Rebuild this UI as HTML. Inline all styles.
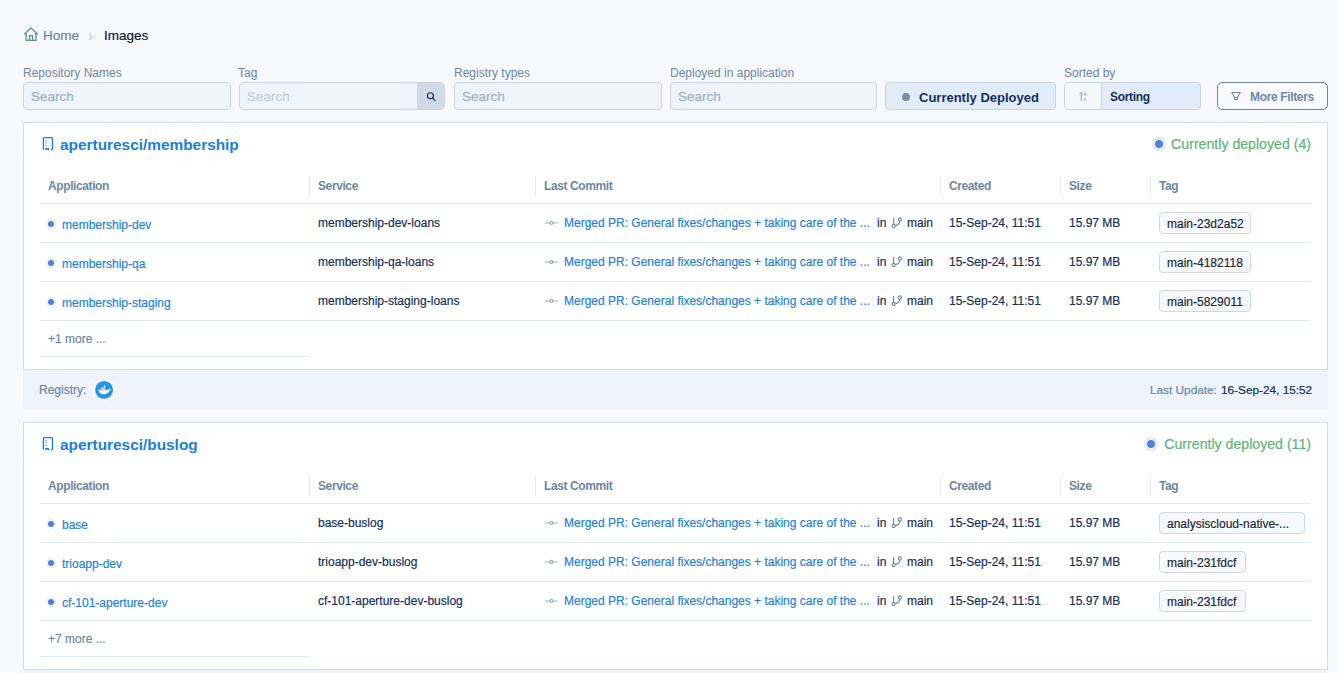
<!DOCTYPE html><html><head><meta charset="utf-8"><style>
*{box-sizing:border-box;margin:0;padding:0}
html,body{width:1339px;height:673px;overflow:hidden;background:#f7f9fd;font-family:"Liberation Sans", sans-serif;}
.a{position:absolute;white-space:nowrap}
.rg{-webkit-text-stroke:0.2px}
.lbl{font-size:12px;color:#6e86a1;line-height:14px}
.inp{position:absolute;top:82px;height:28px;background:#eff4fb;border:1px solid #cbd6e5;border-radius:4px}
.ph{position:absolute;left:7px;top:6px;font-size:13.5px;line-height:16px;color:#9fb0c5}
.card{position:absolute;left:23px;width:1305px;height:248px;background:#fff;border:1px solid #d3dcea}
.ttl{font-size:15.4px;font-weight:bold;color:#1a7fd9;line-height:18px}
.dep{font-size:14.15px;color:#5db677;line-height:16px}
.th{font-size:12px;font-weight:bold;color:#6f86a1;letter-spacing:-0.4px;line-height:14px}
.sep{position:absolute;width:1px;height:20px;background:#e9ecf0}
.hl{position:absolute;height:1px;background:#e2eaf4}
.td{font-size:12px;color:#17315a;line-height:14px}
.lnk{font-size:12px;color:#1f83d9;line-height:14px}
.tag{position:absolute;height:22px;border:1px solid #cdd7e6;background:#f7f9fc;border-radius:4px;font-size:12px;color:#1d2b3d;line-height:20px;padding-left:7px;padding-top:1px}
.more{font-size:12px;color:#6e86a1;line-height:14px}
.reg{position:absolute;left:23px;width:1305px;height:40px;background:#eff4fc}
</style></head><body>
<svg class="a" style="left:23px;top:26px" width="16" height="16" viewBox="0 0 16 16">
<path d="M1.2 8.5 L8 1.8 L14.8 8.5" fill="none" stroke="#6d84a0" stroke-width="1.3" stroke-linejoin="miter"/>
<path d="M3.1 7 V14.3 H12.9 V7" fill="none" stroke="#6d84a0" stroke-width="1.3"/>
<path d="M6.5 14.3 V9.6 H9.5 V14.3" fill="none" stroke="#6d84a0" stroke-width="1.3"/>
</svg>
<div class="a rg" style="left:43px;top:28px;font-size:13.5px;line-height:16px;color:#6b84a0">Home</div>
<svg class="a" style="left:88px;top:33px" width="6" height="8" viewBox="0 0 6 8"><path d="M1.3 1 L4.3 4 L1.3 7" fill="none" stroke="#a2b2c5" stroke-width="1"/></svg>
<div class="a rg" style="left:104px;top:28px;font-size:13.5px;line-height:16px;color:#0f1e33">Images</div>
<div class="a lbl" style="left:23px;top:66px">Repository Names</div>
<div class="a lbl" style="left:238px;top:66px">Tag</div>
<div class="a lbl" style="left:454px;top:66px">Registry types</div>
<div class="a lbl" style="left:670px;top:66px">Deployed in application</div>
<div class="a lbl" style="left:1064px;top:66px">Sorted by</div>
<div class="inp" style="left:23px;width:208px"><span class="ph rg" style="color:#9cafc6">Search</span></div>
<div class="inp" style="left:239px;width:206px;overflow:hidden"><span class="ph rg" style="color:#c3cedc">Search</span><div style="position:absolute;right:-1px;top:-1px;width:28px;height:28px;background:#d0dae8;border-radius:0 4px 4px 0"></div><svg style="position:absolute;left:185px;top:8px" width="12" height="12" viewBox="0 0 12 12"><circle cx="5.4" cy="4.7" r="3" fill="none" stroke="#1c2b40" stroke-width="1.15"/><path d="M7.5 6.9 L10.2 9.8" stroke="#1c2b40" stroke-width="1.2"/></svg></div>
<div class="inp" style="left:454px;width:208px"><span class="ph rg">Search</span></div>
<div class="inp" style="left:670px;width:207px"><span class="ph rg">Search</span></div>
<div class="inp" style="left:885px;width:171px;background:#e2ecf8;border-color:#c8d5e6"><div style="position:absolute;left:16px;top:10px;width:8px;height:8px;border-radius:50%;background:#7a8fa7"></div><span style="position:absolute;left:33px;top:7px;font-size:13px;font-weight:bold;color:#12305a;line-height:16px">Currently Deployed</span></div>
<div class="inp" style="left:1064px;width:137px;background:#e2ecf8;border-color:#c8d5e6;overflow:hidden"><div style="position:absolute;left:0;top:0;width:37px;height:26px;background:#f4f7fc;border-right:1px solid #c8d5e6"></div><svg style="position:absolute;left:11px;top:7px" width="14" height="14" viewBox="0 0 14 14"><path d="M5.3 11 V2.6 M3.5 4.4 L5.3 2.4 L7.1 4.4" fill="none" stroke="#93a2b6" stroke-width="1"/><text x="7.6" y="5.9" font-size="4.8" fill="#a3b2c4" font-family="Liberation Sans" font-weight="bold">A</text><text x="7.8" y="11" font-size="4.8" fill="#a3b2c4" font-family="Liberation Sans" font-weight="bold">z</text></svg><span style="position:absolute;left:45px;top:7px;font-size:12px;font-weight:bold;letter-spacing:-0.3px;color:#12305a;line-height:14px">Sorting</span></div>
<div class="inp" style="left:1217px;width:111px;background:#f8fafd;border-color:#6e86a2;border-radius:5px"><svg style="position:absolute;left:13px;top:8px" width="11" height="10" viewBox="0 0 11 10"><path d="M0.4 1.5 H9.8 M0.9 1.5 L3.6 6.3 M9.3 1.5 L6.6 6.3" fill="none" stroke="#6e86a2" stroke-width="1"/><rect x="3.6" y="6.3" width="3" height="2.3" fill="none" stroke="#6e86a2" stroke-width="1"/></svg><span style="position:absolute;left:32px;top:6px;font-size:12px;font-weight:bold;letter-spacing:-0.35px;color:#7088a3;line-height:16px">More Filters</span></div>
<div class="card" style="top:122px"></div>
<svg class="a" style="left:41px;top:136px" width="14" height="15" viewBox="0 0 14 15">
<path d="M2.4 13.7 V2.6 Q2.4 1.6 3.4 1.6 H10.5 Q11.5 1.6 11.5 2.6 V12.7 Q11.5 13.7 10.5 13.7 H9.8" fill="none" stroke="#1a7fd9" stroke-width="1.35"/>
<path d="M4.4 4.3 H5.7 M4.4 6.8 H5.7 M4.4 9.4 H5.7" stroke="#1a7fd9" stroke-width="1" opacity="0.85"/>
<path d="M4.3 12 H8 V14.6 L6.15 13.5 L4.3 14.6 Z" fill="#1a7fd9"/>
</svg>
<div class="a ttl" style="left:60px;top:136px">aperturesci/membership</div>
<div class="a dep rg" style="right:28px;top:136px">Currently deployed (4)</div>
<div class="a" style="left:1152px;top:137px;width:14px;height:14px;border-radius:50%;border:2px solid #dfe7f9;background:#fff"></div>
<div class="a" style="left:1155px;top:140px;width:8px;height:8px;border-radius:50%;background:#4f80df"></div>
<div class="a th" style="left:48px;top:179px">Application</div>
<div class="a th" style="left:318px;top:179px">Service</div>
<div class="a th" style="left:544px;top:179px">Last Commit</div>
<div class="a th" style="left:949px;top:179px">Created</div>
<div class="a th" style="left:1069px;top:179px">Size</div>
<div class="a th" style="left:1159px;top:179px">Tag</div>
<div class="sep" style="left:309px;top:176px"></div>
<div class="sep" style="left:535px;top:176px"></div>
<div class="sep" style="left:940px;top:176px"></div>
<div class="sep" style="left:1060px;top:176px"></div>
<div class="sep" style="left:1150px;top:176px"></div>
<div class="hl" style="left:40px;width:1271px;top:203px"></div>
<div class="a" style="left:46px;top:219px;width:10px;height:10px;border-radius:50%;border:1px solid #dfe7f9;background:#fff"></div>
<div class="a" style="left:48px;top:221px;width:6px;height:6px;border-radius:50%;background:#4f80df"></div>
<div class="a lnk rg" style="left:62px;top:218px">membership-dev</div>
<div class="a td rg" style="left:318px;top:216px">membership-dev-loans</div>
<svg class="a" style="left:544px;top:219px" width="16" height="8" viewBox="0 0 16 8"><path d="M1 4 H5.8 M9.2 4 H14" stroke="#bfcbd8" stroke-width="1.3"/><circle cx="7.5" cy="3.9" r="1.55" fill="none" stroke="#7088a3" stroke-width="0.95"/></svg>
<div class="a lnk rg" style="left:564px;top:216px">Merged PR: General fixes/changes + taking care of the ...</div>
<div class="a td rg" style="left:877px;top:216px">in</div>
<svg class="a" style="left:889px;top:217px" width="14" height="13" viewBox="0 0 14 13"><path d="M4.6 1 V7.3" stroke="#6f86a1" stroke-width="1.1"/><circle cx="4.6" cy="9" r="1.6" fill="none" stroke="#6f86a1" stroke-width="1.1"/><circle cx="10.8" cy="2.5" r="1.6" fill="none" stroke="#6f86a1" stroke-width="1.1"/><path d="M10.8 4.1 C10.8 6.8 8.6 8.2 6.2 8.9" fill="none" stroke="#6f86a1" stroke-width="1.1"/></svg>
<div class="a td rg" style="left:907px;top:216px">main</div>
<div class="a td rg" style="left:949px;top:216px">15-Sep-24, 11:51</div>
<div class="a td rg" style="left:1069px;top:216px">15.97 MB</div>
<div class="tag rg" style="left:1159px;top:212px;width:92px">main-23d2a52</div>
<div class="hl" style="left:40px;width:1271px;top:242px"></div>
<div class="a" style="left:46px;top:258px;width:10px;height:10px;border-radius:50%;border:1px solid #dfe7f9;background:#fff"></div>
<div class="a" style="left:48px;top:260px;width:6px;height:6px;border-radius:50%;background:#4f80df"></div>
<div class="a lnk rg" style="left:62px;top:257px">membership-qa</div>
<div class="a td rg" style="left:318px;top:255px">membership-qa-loans</div>
<svg class="a" style="left:544px;top:258px" width="16" height="8" viewBox="0 0 16 8"><path d="M1 4 H5.8 M9.2 4 H14" stroke="#bfcbd8" stroke-width="1.3"/><circle cx="7.5" cy="3.9" r="1.55" fill="none" stroke="#7088a3" stroke-width="0.95"/></svg>
<div class="a lnk rg" style="left:564px;top:255px">Merged PR: General fixes/changes + taking care of the ...</div>
<div class="a td rg" style="left:877px;top:255px">in</div>
<svg class="a" style="left:889px;top:256px" width="14" height="13" viewBox="0 0 14 13"><path d="M4.6 1 V7.3" stroke="#6f86a1" stroke-width="1.1"/><circle cx="4.6" cy="9" r="1.6" fill="none" stroke="#6f86a1" stroke-width="1.1"/><circle cx="10.8" cy="2.5" r="1.6" fill="none" stroke="#6f86a1" stroke-width="1.1"/><path d="M10.8 4.1 C10.8 6.8 8.6 8.2 6.2 8.9" fill="none" stroke="#6f86a1" stroke-width="1.1"/></svg>
<div class="a td rg" style="left:907px;top:255px">main</div>
<div class="a td rg" style="left:949px;top:255px">15-Sep-24, 11:51</div>
<div class="a td rg" style="left:1069px;top:255px">15.97 MB</div>
<div class="tag rg" style="left:1159px;top:251px;width:92px">main-4182118</div>
<div class="hl" style="left:40px;width:1271px;top:281px"></div>
<div class="a" style="left:46px;top:297px;width:10px;height:10px;border-radius:50%;border:1px solid #dfe7f9;background:#fff"></div>
<div class="a" style="left:48px;top:299px;width:6px;height:6px;border-radius:50%;background:#4f80df"></div>
<div class="a lnk rg" style="left:62px;top:296px">membership-staging</div>
<div class="a td rg" style="left:318px;top:294px">membership-staging-loans</div>
<svg class="a" style="left:544px;top:297px" width="16" height="8" viewBox="0 0 16 8"><path d="M1 4 H5.8 M9.2 4 H14" stroke="#bfcbd8" stroke-width="1.3"/><circle cx="7.5" cy="3.9" r="1.55" fill="none" stroke="#7088a3" stroke-width="0.95"/></svg>
<div class="a lnk rg" style="left:564px;top:294px">Merged PR: General fixes/changes + taking care of the ...</div>
<div class="a td rg" style="left:877px;top:294px">in</div>
<svg class="a" style="left:889px;top:295px" width="14" height="13" viewBox="0 0 14 13"><path d="M4.6 1 V7.3" stroke="#6f86a1" stroke-width="1.1"/><circle cx="4.6" cy="9" r="1.6" fill="none" stroke="#6f86a1" stroke-width="1.1"/><circle cx="10.8" cy="2.5" r="1.6" fill="none" stroke="#6f86a1" stroke-width="1.1"/><path d="M10.8 4.1 C10.8 6.8 8.6 8.2 6.2 8.9" fill="none" stroke="#6f86a1" stroke-width="1.1"/></svg>
<div class="a td rg" style="left:907px;top:294px">main</div>
<div class="a td rg" style="left:949px;top:294px">15-Sep-24, 11:51</div>
<div class="a td rg" style="left:1069px;top:294px">15.97 MB</div>
<div class="tag rg" style="left:1159px;top:290px;width:92px">main-5829011</div>
<div class="hl" style="left:40px;width:1271px;top:320px"></div>
<div class="a more rg" style="left:48px;top:332px">+1 more ...</div>
<div class="hl" style="left:40px;width:270px;top:356px"></div>
<div class="reg" style="top:370px"></div>
<div class="a more rg" style="left:39px;top:383px">Registry:</div>
<svg class="a" style="left:93px;top:379px" width="22" height="22" viewBox="0 0 22 22">
<circle cx="11.1" cy="10.9" r="11" fill="none" stroke="#ffffff" stroke-width="1.2" opacity="0.9"/>
<circle cx="11.1" cy="10.9" r="8.9" fill="#2496ed"/>
<path d="M5.3 10.7 L15.9 10.7 C16.2 10 16.4 9.3 16.3 9 C16.9 9.4 17.1 9.9 17.1 10.4 C17.5 10.2 17.9 10.2 18.2 10.4 C17.8 11 17.2 11.4 16.6 11.5 C15.5 14 13.4 15.2 11 15.2 C7.8 15.2 5.8 13.4 5.3 10.7 Z" fill="#fff"/>
<path d="M8 8.5 h1.6 v2.1 h-1.6z M9.8 8.5 h1.5 v2.1 h-1.5z" fill="#cfe6fb"/>
<path d="M11.1 6.1 h1 v4.5 h-1z" fill="#eef7fe"/>
</svg>
<div class="a rg" style="left:1150px;top:383px;font-size:11.8px;line-height:14px;color:#6e86a1">Last Update:</div>
<div class="a rg" style="left:1221px;top:383px;font-size:11.8px;line-height:14px;color:#14305a">16-Sep-24, 15:52</div>
<div class="card" style="top:422px"></div>
<svg class="a" style="left:41px;top:436px" width="14" height="15" viewBox="0 0 14 15">
<path d="M2.4 13.7 V2.6 Q2.4 1.6 3.4 1.6 H10.5 Q11.5 1.6 11.5 2.6 V12.7 Q11.5 13.7 10.5 13.7 H9.8" fill="none" stroke="#1a7fd9" stroke-width="1.35"/>
<path d="M4.4 4.3 H5.7 M4.4 6.8 H5.7 M4.4 9.4 H5.7" stroke="#1a7fd9" stroke-width="1" opacity="0.85"/>
<path d="M4.3 12 H8 V14.6 L6.15 13.5 L4.3 14.6 Z" fill="#1a7fd9"/>
</svg>
<div class="a ttl" style="left:60px;top:436px">aperturesci/buslog</div>
<div class="a dep rg" style="right:28px;top:436px">Currently deployed (11)</div>
<div class="a" style="left:1144px;top:437px;width:14px;height:14px;border-radius:50%;border:2px solid #dfe7f9;background:#fff"></div>
<div class="a" style="left:1147px;top:440px;width:8px;height:8px;border-radius:50%;background:#4f80df"></div>
<div class="a th" style="left:48px;top:479px">Application</div>
<div class="a th" style="left:318px;top:479px">Service</div>
<div class="a th" style="left:544px;top:479px">Last Commit</div>
<div class="a th" style="left:949px;top:479px">Created</div>
<div class="a th" style="left:1069px;top:479px">Size</div>
<div class="a th" style="left:1159px;top:479px">Tag</div>
<div class="sep" style="left:309px;top:476px"></div>
<div class="sep" style="left:535px;top:476px"></div>
<div class="sep" style="left:940px;top:476px"></div>
<div class="sep" style="left:1060px;top:476px"></div>
<div class="sep" style="left:1150px;top:476px"></div>
<div class="hl" style="left:40px;width:1271px;top:503px"></div>
<div class="a" style="left:46px;top:519px;width:10px;height:10px;border-radius:50%;border:1px solid #dfe7f9;background:#fff"></div>
<div class="a" style="left:48px;top:521px;width:6px;height:6px;border-radius:50%;background:#4f80df"></div>
<div class="a lnk rg" style="left:62px;top:518px">base</div>
<div class="a td rg" style="left:318px;top:516px">base-buslog</div>
<svg class="a" style="left:544px;top:519px" width="16" height="8" viewBox="0 0 16 8"><path d="M1 4 H5.8 M9.2 4 H14" stroke="#bfcbd8" stroke-width="1.3"/><circle cx="7.5" cy="3.9" r="1.55" fill="none" stroke="#7088a3" stroke-width="0.95"/></svg>
<div class="a lnk rg" style="left:564px;top:516px">Merged PR: General fixes/changes + taking care of the ...</div>
<div class="a td rg" style="left:877px;top:516px">in</div>
<svg class="a" style="left:889px;top:517px" width="14" height="13" viewBox="0 0 14 13"><path d="M4.6 1 V7.3" stroke="#6f86a1" stroke-width="1.1"/><circle cx="4.6" cy="9" r="1.6" fill="none" stroke="#6f86a1" stroke-width="1.1"/><circle cx="10.8" cy="2.5" r="1.6" fill="none" stroke="#6f86a1" stroke-width="1.1"/><path d="M10.8 4.1 C10.8 6.8 8.6 8.2 6.2 8.9" fill="none" stroke="#6f86a1" stroke-width="1.1"/></svg>
<div class="a td rg" style="left:907px;top:516px">main</div>
<div class="a td rg" style="left:949px;top:516px">15-Sep-24, 11:51</div>
<div class="a td rg" style="left:1069px;top:516px">15.97 MB</div>
<div class="tag rg" style="left:1159px;top:512px;width:146px">analysiscloud-native-...</div>
<div class="hl" style="left:40px;width:1271px;top:542px"></div>
<div class="a" style="left:46px;top:558px;width:10px;height:10px;border-radius:50%;border:1px solid #dfe7f9;background:#fff"></div>
<div class="a" style="left:48px;top:560px;width:6px;height:6px;border-radius:50%;background:#4f80df"></div>
<div class="a lnk rg" style="left:62px;top:557px">trioapp-dev</div>
<div class="a td rg" style="left:318px;top:555px">trioapp-dev-buslog</div>
<svg class="a" style="left:544px;top:558px" width="16" height="8" viewBox="0 0 16 8"><path d="M1 4 H5.8 M9.2 4 H14" stroke="#bfcbd8" stroke-width="1.3"/><circle cx="7.5" cy="3.9" r="1.55" fill="none" stroke="#7088a3" stroke-width="0.95"/></svg>
<div class="a lnk rg" style="left:564px;top:555px">Merged PR: General fixes/changes + taking care of the ...</div>
<div class="a td rg" style="left:877px;top:555px">in</div>
<svg class="a" style="left:889px;top:556px" width="14" height="13" viewBox="0 0 14 13"><path d="M4.6 1 V7.3" stroke="#6f86a1" stroke-width="1.1"/><circle cx="4.6" cy="9" r="1.6" fill="none" stroke="#6f86a1" stroke-width="1.1"/><circle cx="10.8" cy="2.5" r="1.6" fill="none" stroke="#6f86a1" stroke-width="1.1"/><path d="M10.8 4.1 C10.8 6.8 8.6 8.2 6.2 8.9" fill="none" stroke="#6f86a1" stroke-width="1.1"/></svg>
<div class="a td rg" style="left:907px;top:555px">main</div>
<div class="a td rg" style="left:949px;top:555px">15-Sep-24, 11:51</div>
<div class="a td rg" style="left:1069px;top:555px">15.97 MB</div>
<div class="tag rg" style="left:1159px;top:551px;width:87px">main-231fdcf</div>
<div class="hl" style="left:40px;width:1271px;top:581px"></div>
<div class="a" style="left:46px;top:597px;width:10px;height:10px;border-radius:50%;border:1px solid #dfe7f9;background:#fff"></div>
<div class="a" style="left:48px;top:599px;width:6px;height:6px;border-radius:50%;background:#4f80df"></div>
<div class="a lnk rg" style="left:62px;top:596px">cf-101-aperture-dev</div>
<div class="a td rg" style="left:318px;top:594px">cf-101-aperture-dev-buslog</div>
<svg class="a" style="left:544px;top:597px" width="16" height="8" viewBox="0 0 16 8"><path d="M1 4 H5.8 M9.2 4 H14" stroke="#bfcbd8" stroke-width="1.3"/><circle cx="7.5" cy="3.9" r="1.55" fill="none" stroke="#7088a3" stroke-width="0.95"/></svg>
<div class="a lnk rg" style="left:564px;top:594px">Merged PR: General fixes/changes + taking care of the ...</div>
<div class="a td rg" style="left:877px;top:594px">in</div>
<svg class="a" style="left:889px;top:595px" width="14" height="13" viewBox="0 0 14 13"><path d="M4.6 1 V7.3" stroke="#6f86a1" stroke-width="1.1"/><circle cx="4.6" cy="9" r="1.6" fill="none" stroke="#6f86a1" stroke-width="1.1"/><circle cx="10.8" cy="2.5" r="1.6" fill="none" stroke="#6f86a1" stroke-width="1.1"/><path d="M10.8 4.1 C10.8 6.8 8.6 8.2 6.2 8.9" fill="none" stroke="#6f86a1" stroke-width="1.1"/></svg>
<div class="a td rg" style="left:907px;top:594px">main</div>
<div class="a td rg" style="left:949px;top:594px">15-Sep-24, 11:51</div>
<div class="a td rg" style="left:1069px;top:594px">15.97 MB</div>
<div class="tag rg" style="left:1159px;top:590px;width:87px">main-231fdcf</div>
<div class="hl" style="left:40px;width:1271px;top:620px"></div>
<div class="a more rg" style="left:48px;top:632px">+7 more ...</div>
<div class="hl" style="left:40px;width:270px;top:656px"></div>
<div class="reg" style="top:670px"></div>
</body></html>
